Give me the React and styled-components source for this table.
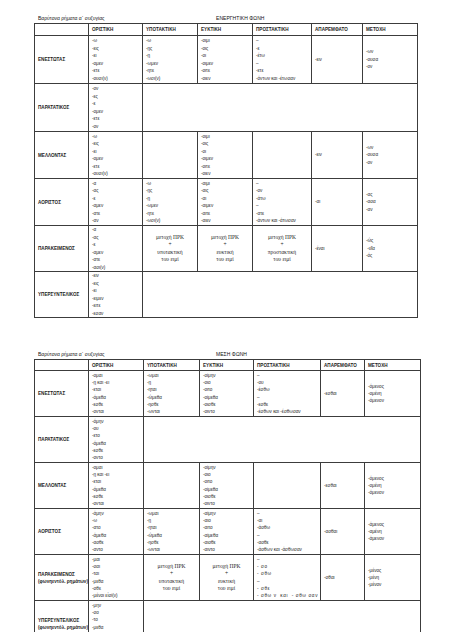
import React from 'react';
import styled, { createGlobalStyle } from 'styled-components';

const GlobalStyle = createGlobalStyle`
    html, body {
        margin: 0;
        padding: 0;
        background: #ffffff;
    }
    body {
        font-family: "Liberation Sans", Arial, sans-serif;
        color: #1c1c1c;
    }
`;

const DASH = '–';

const active = {
    voice: 'ΕΝΕΡΓΗΤΙΚΗ ΦΩΝΗ',
    cols: [54, 54, 55, 55, 59, 51, 55],
    head: 12,
    lineHeight: 7.5,
    rows: [
        {
            label: ['ΕΝΕΣΤΩΤΑΣ'],
            height: 48,
            cells: [
                { lines: ['-ω', '-εις', '-ει', '-ομεν', '-ετε', '-ουσι(ν)'] },
                { lines: ['-ω', '-ῃς', '-ῃ', '-ωμεν', '-ητε', '-ωσι(ν)'] },
                { lines: ['-οιμι', '-οις', '-οι', '-οιμεν', '-οιτε', '-οιεν'] },
                { lines: [DASH, '-ε', '-έτω', DASH, '-ετε', '-όντων και -έτωσαν'] },
                { lines: ['-ειν'] },
                { lines: ['-ων', '-ουσα', '-ον'] },
            ],
        },
        {
            label: ['ΠΑΡΑΤΑΤΙΚΟΣ'],
            height: 48,
            cells: [
                { lines: ['-ον', '-ες', '-ε', '-ομεν', '-ετε', '-ον'] },
                { span: 5 },
            ],
        },
        {
            label: ['ΜΕΛΛΟΝΤΑΣ'],
            height: 47,
            cells: [
                { lines: ['-ω', '-εις', '-ει', '-ομεν', '-ετε', '-ουσι(ν)'] },
                { span: 1 },
                { lines: ['-οιμι', '-οις', '-οι', '-οιμεν', '-οιτε', '-οιεν'] },
                { span: 1 },
                { lines: ['-ειν'] },
                { lines: ['-ων', '-ουσα', '-ον'] },
            ],
        },
        {
            label: ['ΑΟΡΙΣΤΟΣ'],
            height: 47,
            cells: [
                { lines: ['-α', '-ας', '-ε', '-αμεν', '-ατε', '-αν'] },
                { lines: ['-ω', '-ῃς', '-ῃ', '-ωμεν', '-ητε', '-ωσι(ν)'] },
                { lines: ['-αιμι', '-αις', '-αι', '-αιμεν', '-αιτε', '-αιεν'] },
                { lines: [DASH, '-ον', '-άτω', DASH, '-ατε', '-άντων και -άτωσαν'] },
                { lines: ['-αι'] },
                { lines: ['-ας', '-ασα', '-αν'] },
            ],
        },
        {
            label: ['ΠΑΡΑΚΕΙΜΕΝΟΣ'],
            height: 46,
            cells: [
                { lines: ['-α', '-ας', '-ε', '-αμεν', '-ατε', '-ασι(ν)'] },
                { peri: 'υποτακτική' },
                { peri: 'ευκτική' },
                { peri: 'προστακτική' },
                { lines: ['-έναι'] },
                { lines: ['-ώς', ' -υῖα', '-ός'] },
            ],
        },
        {
            label: ['ΥΠΕΡΣΥΝΤΕΛΙΚΟΣ'],
            height: 46,
            cells: [
                { lines: ['-ειν', '-εις', '-ει', '-ειμεν', '-ειτε', '-εσαν'] },
                { span: 5 },
            ],
        },
    ],
};

const middle = {
    voice: 'ΜΕΣΗ ΦΩΝΗ',
    cols: [54, 55, 56, 54, 67, 44, 56],
    head: 11,
    lineHeight: 7.15,
    rows: [
        {
            label: ['ΕΝΕΣΤΩΤΑΣ'],
            height: 46,
            cells: [
                { lines: ['-ομαι', '-ῃ και -ει', '-εται', '-όμεθα', '-εσθε', '-ονται'] },
                { lines: ['-ωμαι', '-ῃ', '-ηται', '-ώμεθα', '-ησθε', '-ωνται'] },
                { lines: ['-οίμην', '-οιο', '-οιτο', '-οίμεθα', '-οισθε', '-οιντο'] },
                { lines: [DASH, '-ου', '-έσθω', DASH, '-εσθε', '-έσθων και -έσθωσαν'] },
                { lines: ['-εσθαι'] },
                { lines: ['-όμενος', '-ομένη', '-όμενον'] },
            ],
        },
        {
            label: ['ΠΑΡΑΤΑΤΙΚΟΣ'],
            height: 46,
            cells: [
                { lines: ['-όμην', '-ου', '-ετο', '-όμεθα', '-εσθε', '-οντο'] },
                { span: 5 },
            ],
        },
        {
            label: ['ΜΕΛΛΟΝΤΑΣ'],
            height: 46,
            cells: [
                { lines: ['-ομαι', '-ῃ και -ει', '-εται', '-όμεθα', '-εσθε', '-ονται'] },
                { span: 1 },
                { lines: ['-οίμην', '-οιο', '-οιτο', '-οίμεθα', '-οισθε', '-οιντο'] },
                { span: 1 },
                { lines: ['-εσθαι'] },
                { lines: ['-όμενος', '-ομένη', '-όμενον'] },
            ],
        },
        {
            label: ['ΑΟΡΙΣΤΟΣ'],
            height: 46,
            cells: [
                { lines: ['-άμην', '-ω', '-ατο', '-άμεθα', '-ασθε', '-αντο'] },
                { lines: ['-ωμαι', '-ῃ', '-ηται', '-ώμεθα', '-ησθε', '-ωνται'] },
                { lines: ['-αίμην', '-αιο', '-αιτο', '-αίμεθα', '-αισθε', '-αιντο'] },
                { lines: [DASH, '-αι', '-άσθω', DASH, '-ασθε', '-άσθων και -άσθωσαν'] },
                { lines: ['-ασθαι'] },
                { lines: ['-άμενος', '-αμένη', '-άμενον'] },
            ],
        },
        {
            label: ['ΠΑΡΑΚΕΙΜΕΝΟΣ', '(φωνηεντόλ. ρημάτων)'],
            height: 46,
            cells: [
                { lines: ['-μαι', '-σαι', '-ται', '-μεθα', '-σθε', '-μένοι εἰσί(ν)'] },
                { peri: 'υποτακτική' },
                { peri: 'ευκτική' },
                { lines: [DASH, '- σο', '- σθω', DASH, '- σθε', '- σθω ν  και  - σθω σαν'], spaced: true },
                { lines: ['-σθαι'] },
                { lines: ['-μένος', '-μένη', '-μένον'] },
            ],
        },
        {
            label: ['ΥΠΕΡΣΥΝΤΕΛΙΚΟΣ', '(φωνηεντόλ. ρημάτων)'],
            height: 46,
            cells: [
                { lines: ['-μην', '-σο', '-το', '-μεθα', '-σθε', '-μένοι ἦσαν'] },
                { span: 5 },
            ],
        },
    ],
};

const headings = ['ΟΡΙΣΤΙΚΗ', 'ΥΠΟΤΑΚΤΙΚΗ', 'ΕΥΚΤΙΚΗ', 'ΠΡΟΣΤΑΚΤΙΚΗ', 'ΑΠΑΡΕΜΦΑΤΟ', 'ΜΕΤΟΧΗ'];

// each value is the distance between two rule lines; the 1px gap is the rule itself
const tracks = (list) => list.map((v) => `${v - 1}px`).join(' ');

const Block = ({ data }) => (
    <Section>
        <Caption>
            <Title>Βαρύτονα ρήματα α΄ συζυγίας</Title>
            <Voice>{data.voice}</Voice>
        </Caption>
        <Grid
            $cols={tracks(data.cols)}
            $rows={tracks([data.head, ...data.rows.map((r) => r.height)])}
        >
            <Head />
            {headings.map((h) => (
                <Head key={h}>{h}</Head>
            ))}
            {data.rows.map((row) => (
                <React.Fragment key={row.label.join()}>
                    <Label>
                        {row.label.map((l) => (
                            <div key={l}>{l}</div>
                        ))}
                    </Label>
                    {row.cells.map((cell, i) => {
                        if (cell.span) {
                            return <Blank key={i} $span={cell.span} />;
                        }
                        if (cell.peri) {
                            return (
                                <Peri key={i}>
                                    <div>μετοχή ΠΡΚ</div>
                                    <div>+</div>
                                    <div>{cell.peri}</div>
                                    <div>του ειμί</div>
                                </Peri>
                            );
                        }
                        return (
                            <Endings key={i} $lh={data.lineHeight} $spaced={cell.spaced}>
                                {cell.lines.map((l, j) => (
                                    <div key={j}>{l}</div>
                                ))}
                            </Endings>
                        );
                    })}
                </React.Fragment>
            ))}
        </Grid>
    </Section>
);

const App = () => (
    <Page>
        <GlobalStyle />
        <Block data={active} />
        <Block data={middle} />
    </Page>
);

export default App;

const Page = styled.div`
    padding: 15px 0 0 34px;
    display: flex;
    flex-direction: column;
    gap: 33px;
`;

const Section = styled.section`
    display: flex;
    flex-direction: column;
    align-items: flex-start;
`;

const Caption = styled.div`
    display: flex;
    align-items: flex-end;
    height: 7px;
    margin-bottom: 1px;
    font-size: 5px;
    line-height: 7px;
    color: #111;
    white-space: nowrap;
`;

const Title = styled.span`
    width: 178px;
    padding-left: 4px;
`;

const Voice = styled.span`
    letter-spacing: 0.05px;
`;

const Grid = styled.div`
    display: grid;
    width: max-content;
    grid-template-columns: ${(p) => p.$cols};
    grid-template-rows: ${(p) => p.$rows};
    gap: 1px;
    background: #3c3c3c;
    border: 1px solid #3c3c3c;
`;

const Box = styled.div`
    background: #ffffff;
    display: flex;
    flex-direction: column;
    justify-content: center;
    padding: 0 3px;
    overflow: hidden;
    white-space: nowrap;
    min-width: 0;
`;

const Head = styled(Box)`
    font-size: 4.6px;
    font-weight: bold;
`;

const Label = styled(Box)`
    font-size: 4.6px;
    font-weight: bold;
    line-height: 7px;
    padding-left: 3px;
`;

const Blank = styled(Box)`
    grid-column: span ${(p) => p.$span};
`;

const Endings = styled(Box)`
    font-size: 4.6px;
    line-height: ${(p) => p.$lh}px;
    letter-spacing: ${(p) => (p.$spaced ? '0.6px' : '0')};
    white-space: pre;
`;

const Peri = styled(Box)`
    font-family: "Liberation Serif", "Times New Roman", serif;
    font-size: 5.5px;
    line-height: 7.5px;
    text-align: center;
    align-items: center;
`;
